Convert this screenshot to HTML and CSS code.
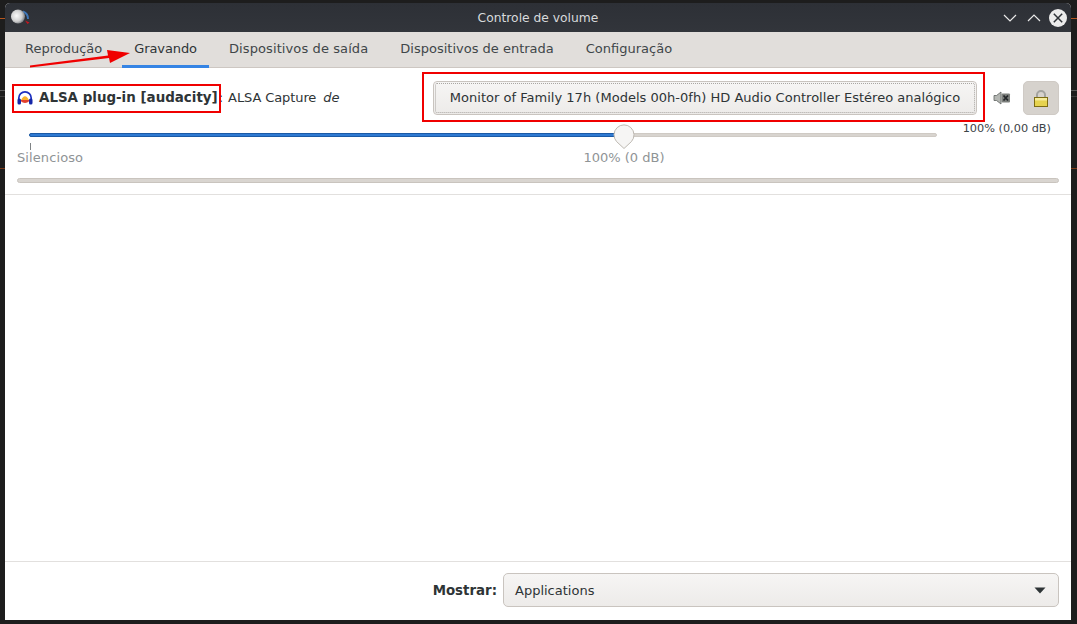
FILE: index.html
```html
<!DOCTYPE html>
<html lang="pt">
<head>
<meta charset="utf-8">
<title>Controle de volume</title>
<link rel="stylesheet" href="styles.css">
</head>
<body>
<div class="desktop">
  <div class="window">
    <header class="titlebar">
      <svg class="app-icon" width="20" height="20" viewBox="0 0 20 20">
        <defs><radialGradient id="ball" cx="0.4" cy="0.45" r="0.6"><stop offset="0" stop-color="#fafafa"/><stop offset="0.65" stop-color="#d0d0d0"/><stop offset="1" stop-color="#7b7e83"/></radialGradient></defs>
        <path d="M13 3.500 A8 8 0 0 1 18 11" fill="none" stroke="#3f77b8" stroke-width="2"/>
        <path d="M15 12.500 L19.500 14.500 L17.500 16 Z" fill="#c8141e"/>
        <circle cx="8" cy="8.500" r="7" fill="url(#ball)"/>
      </svg>
      <div class="title">Controle de volume</div>
      <div class="controls">
        <svg width="14" height="14" viewBox="0 0 14 14"><path d="M1 4 L7 10 L13 4" fill="none" stroke="#e8e8e8" stroke-width="1.200"/></svg>
        <svg width="14" height="14" viewBox="0 0 14 14"><path d="M1 10 L7 4 L13 10" fill="none" stroke="#e8e8e8" stroke-width="1.200"/></svg>
        <svg class="close" width="18" height="18" viewBox="0 0 18 18"><circle cx="9" cy="9" r="9" fill="#ececec"/><path d="M4.800 4.800 L13.200 13.200 M13.200 4.800 L4.800 13.200" stroke="#2f3338" stroke-width="1.500"/></svg>
      </div>
    </header>

    <nav class="tabs">
      <div class="tab">Reprodução</div>
      <div class="tab active">Gravando</div>
      <div class="tab wide">Dispositivos de saída</div>
      <div class="tab">Dispositivos de entrada</div>
      <div class="tab">Configuração</div>
    </nav>

    <main class="content">
      <section class="stream">
        <div class="stream-head">
          <svg class="stream-icon" width="16" height="16" viewBox="0 0 16 16">
            <path d="M1.800 10 V8 A6.200 6.200 0 0 1 14.200 8 V10" fill="none" stroke="#1c2fc0" stroke-width="1.700"/>
            <path d="M3.500 11 Q8 1.500 12.500 11 Z" fill="#f7b02c"/>
            <path d="M3.500 10 H12.500 V11 Q8 15 3.500 11 Z" fill="#e2402c"/>
            <rect x="0.500" y="8.500" width="3.500" height="6" rx="1.500" fill="#1527a8"/>
            <rect x="12" y="8.500" width="3.500" height="6" rx="1.500" fill="#1527a8"/>
          </svg>
          <span class="app-name">ALSA plug-in [audacity]</span><span class="colon">:</span><span class="desc">ALSA Capture <em>de</em></span>
          <button class="device">Monitor of Family 17h (Models 00h-0fh) HD Audio Controller Estéreo analógico</button>
          <svg class="mute" width="18" height="16" viewBox="0 0 18 16">
            <path d="M1 5.500 H3.500 L8 2 V14 L3.500 10.500 H1 Z" fill="#b4b7b3" stroke="#5e625f" stroke-width="0.800"/>
            <rect x="8.500" y="3.500" width="8.500" height="9" rx="1" fill="#7c7f7c"/>
            <path d="M10.500 5.500 L15 10.500 M15 5.500 L10.500 10.500" stroke="#24272a" stroke-width="1.800"/>
          </svg>
          <button class="lock">
            <svg width="16" height="18" viewBox="0 0 16 18">
              <path d="M4 7 V5 A4 4 0 0 1 12 5 V7" fill="none" stroke="#a3a39f" stroke-width="2"/>
              <rect x="1.500" y="7.500" width="13" height="9" fill="#e6d34f" stroke="#7d6c12"/>
              <rect x="2" y="8" width="12" height="2.500" fill="#f6ec9a"/>
            </svg>
          </button>
        </div>
        <div class="slider-row">
          <div class="slider">
            <div class="fill" style="width: 65.5%"></div>
            <svg class="knob" style="left: 65.6%" width="22" height="26" viewBox="0 0 22 26">
              <path d="M11 24.500 L3.500 17.500 A10 10 0 1 1 18.500 17.500 Z" fill="#f6f5f4" stroke="#bdb8b1"/>
            </svg>
          </div>
          <div class="value">100% (0,00 dB)</div>
        </div>
        <div class="marks">
          <i class="tick"></i>
          <span class="mark-start">Silencioso</span>
          <span class="mark-mid" style="left: 58.25%">100% (0 dB)</span>
        </div>
        <div class="level"></div>
      </section>
      <div class="spacer"></div>
      <footer class="footer">
        <label class="show-label">Mostrar:</label>
        <div class="combo">
          <span>Applications</span>
          <svg width="12" height="7" viewBox="0 0 12 7"><path d="M0.500 0.500 H11.500 L6 6.500 Z" fill="#2e3436"/></svg>
        </div>
      </footer>
    </main>

    <div class="note note-app"></div>
    <div class="note note-device"></div>
    <svg class="arrow" width="110" height="30" viewBox="0 0 110 30">
      <path d="M0 20.500 L78 10.500 L77 5 L100 8 L80 18 L79 13 L0 22.500 Z" fill="#f00000"/>
    </svg>
  </div>
</div>
</body>
</html>
```

FILE: styles.css
```css
* { box-sizing: border-box; }
html, body { margin: 0; height: 100%; }
body {
  font-family: "DejaVu Sans", sans-serif;
  font-size: 13px;
  color: #2e3436;
  overflow: hidden;
}
.desktop {
  width: 1077px;
  height: 624px;
  padding: 3px 6px 4px 5px;
  background:
    linear-gradient(#b4551e, #b4551e) 0 18px / 100% 1px no-repeat,
    linear-gradient(#7a3a18, #7a3a18) 0 168px / 100% 1px no-repeat,
    linear-gradient(#5a5a5a, #5a5a5a) 0 90px / 100% 1px no-repeat,
    linear-gradient(#3c3c3c, #3c3c3c) 0 96px / 100% 1px no-repeat,
    #1d1d1d;
}
.window {
  position: relative;
  height: 100%;
  display: flex;
  flex-direction: column;
  background: #fff;
  border-radius: 5px 5px 0 0;
  overflow: hidden;
}
.titlebar {
  height: 29px;
  flex: none;
  display: flex;
  align-items: center;
  padding: 0 4px 0 5px;
  background: linear-gradient(#2d3036, #32353b);
  color: #d8dadc;
}
.title {
  flex: 1;
  text-align: center;
  font-size: 12.300px;
  padding-left: 43px;
}
.controls {
  display: flex;
  align-items: center;
  gap: 10px;
}
.close { margin-left: -2px; }
.tabs {
  height: 36px;
  flex: none;
  display: flex;
  gap: 8px;
  padding: 0 8px;
  background: #e1dedb;
  border-bottom: 1px solid #cdc7c2;
}
.tab {
  height: 36px;
  padding: 0 12px;
  line-height: 33px;
  color: #3f4649;
}
.tab.wide { letter-spacing: 0.1px; }
.tab.active {
  border-bottom: 3px solid #3584e4;
  color: #2e3436;
  letter-spacing: -0.1px;
}
.content {
  flex: 1;
  display: flex;
  flex-direction: column;
  min-height: 0;
}
.stream {
  height: 127px;
  flex: none;
  padding: 13px 12px 0 12px;
  border-bottom: 1px solid #e2e0de;
}
.stream-head {
  display: flex;
  align-items: center;
  height: 34px;
}
.stream-icon { margin-right: 6px; flex: none; }
.app-name { font-weight: bold; font-size: 13.430px; white-space: nowrap; padding-bottom: 2px; }
.colon { padding: 0 5px 2px 1px; }
.desc { white-space: nowrap; flex: 1; padding-bottom: 2px; letter-spacing: -0.1px; }
.desc em { font-style: italic; margin-left: 3px; }
.device {
  width: 544px;
  height: 34px;
  flex: none;
  font: inherit;
  letter-spacing: 0.02px;
  color: #2e3436;
  border: 1px solid #c9c4bf;
  border-radius: 4px;
  outline: 1px dotted #a9a6a2;
  outline-offset: -3px;
  background: linear-gradient(#f6f5f4, #edebe9);
  padding: 0 0 2px;
  white-space: nowrap;
}
.mute { margin: 0 12px 0 16px; flex: none; }
.lock {
  width: 36px;
  height: 34px;
  flex: none;
  border: 1px solid #cfcac5;
  border-radius: 5px;
  background: #d6d2cd;
  padding: 2px 0 0;
  display: flex;
  align-items: center;
  justify-content: center;
}
.slider-row {
  position: relative;
  height: 18px;
  margin-top: 13px;
  padding-left: 12px;
}
.slider {
  position: relative;
  width: 908px;
  height: 4px;
  top: 5px;
  background: #d8d4cf;
  border-radius: 2px;
  border: 1px solid #cfcac4;
}
.fill {
  height: 4px;
  margin: -1px 0 0 -1px;
  background: #2f7ad2;
  border: 1px solid #1b5aa6;
  border-radius: 2px;
}
.knob {
  position: absolute;
  top: -10px;
  margin-left: -11px;
}
.value {
  position: absolute;
  right: 8px;
  top: -6px;
  font-size: 11.300px;
  color: #3c4347;
  white-space: nowrap;
}
.marks {
  position: relative;
  height: 32px;
  color: #8f9496;
  padding-top: 2px;
}
.tick {
  position: absolute;
  left: 13px;
  top: -3px;
  width: 1px;
  height: 7px;
  background: #7f8385;
}
.mark-start { line-height: 20px; letter-spacing: 0.1px; }
.mark-mid {
  position: absolute;
  top: 2px;
  line-height: 20px;
  transform: translateX(-50%);
  white-space: nowrap;
}
.level {
  height: 5px;
  background: #d9d5d0;
  border: 1px solid #c9c4be;
  border-radius: 3px;
}
.spacer { flex: 1; }
.footer {
  height: 59px;
  flex: none;
  display: flex;
  align-items: center;
  justify-content: flex-end;
  gap: 6px;
  padding: 0 12px 2px 0;
  border-top: 1px solid #e2e0de;
}
.show-label { font-weight: bold; font-size: 13.370px; }
.combo {
  width: 556px;
  height: 34px;
  display: flex;
  align-items: center;
  justify-content: space-between;
  padding: 0 12px 0 11px;
  border: 1px solid #c9c4bf;
  border-radius: 5px;
  background: linear-gradient(#f6f5f4, #edebe9);
}
.note {
  position: absolute;
  border: 2px solid #f00000;
  pointer-events: none;
}
.note-app { left: 7px; top: 81px; width: 209px; height: 29px; }
.note-device { left: 417px; top: 69px; width: 563px; height: 50px; }
.arrow { position: absolute; left: 25px; top: 42px; }
```
